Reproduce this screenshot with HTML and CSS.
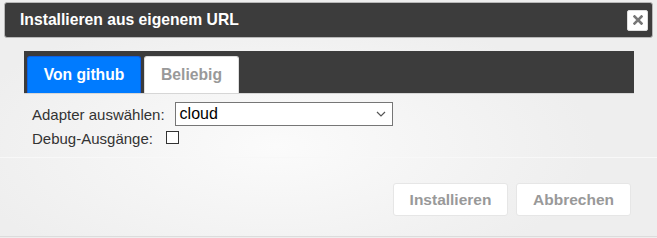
FILE: index.html
```html
<!DOCTYPE html>
<html>
  <head>
    <title>Installieren aus eigenem URL</title>
    <link rel="stylesheet" href="styles.css">
  </head>
  <body>
    <section class="dialog">
      <header class="titlebar">
        <span class="title">Installieren aus eigenem URL</span>
        <button class="close" title="Schließen">
          <svg width="10" height="10" viewBox="0 0 10 10">
            <path d="M1.5 1.5 L8.5 8.5 M8.5 1.5 L1.5 8.5" stroke="#777" stroke-width="2.6" stroke-linecap="square"/>
          </svg>
        </button>
      </header>
      <nav class="tabs">
        <div class="tab active">Von github</div>
        <div class="tab">Beliebig</div>
      </nav>
      <div class="content">
        <div class="row">
          <label for="adapter">Adapter auswählen:</label>
          <div class="select" id="adapter">
            <span>cloud</span>
            <svg width="10" height="6" viewBox="0 0 10 6">
              <path d="M1 1 L5 5 L9 1" fill="none" stroke="#555" stroke-width="1.2"/>
            </svg>
          </div>
        </div>
        <div class="row">
          <label for="debug">Debug-Ausgänge:</label>
          <span class="checkbox" id="debug"></span>
        </div>
      </div>
      <footer class="buttons">
        <button class="btn">Installieren</button>
        <button class="btn">Abbrechen</button>
      </footer>
    </section>
  </body>
</html>
```

FILE: styles.css
```css
  body {
    margin: 0;
    font-family: 'Liberation Sans', Arial, sans-serif;
    background: #eeeeee;
  }

  .dialog {
    height: 237px;
    border-bottom: 1px solid #dcdcdc;
    background: radial-gradient(ellipse 320px 140px at 42% 62%, #fbfbfb, #eeeeee);
    padding-top: 2px;
    box-sizing: border-box;
  }

  .titlebar {
    margin: 0 4px;
    height: 36px;
    box-sizing: border-box;
    border: 1px solid #b8b8b8;
    border-radius: 3px;
    background: #3c3c3c;
    display: flex;
    align-items: center;
    justify-content: space-between;
    padding: 0 4px 0 15px;
  }

  .title {
    color: #fff;
    font-weight: bold;
    font-size: 15.7px;
  }

  .close {
    width: 21px;
    height: 21px;
    padding: 0;
    border: 1px solid #ddd;
    border-radius: 2px;
    background: #fff;
    display: flex;
    align-items: center;
    justify-content: center;
  }

  .tabs {
    margin: 13px 23px 0 24px;
    height: 43px;
    box-sizing: border-box;
    background: #3c3c3c;
    border-bottom: 1px solid #d6d6d6;
    display: flex;
    align-items: flex-end;
    gap: 3px;
    padding-left: 3px;
  }

  .tab {
    width: 95px;
    height: 37px;
    box-sizing: border-box;
    background: #fff;
    border: 1px solid #ddd;
    border-bottom: none;
    border-radius: 3px 3px 0 0;
    color: #999;
    font-weight: bold;
    font-size: 15.7px;
    display: flex;
    align-items: center;
    justify-content: center;
  }

  .tab.active {
    width: 114px;
    background: #007bff;
    border-color: #0d5ee0;
    color: #fff;
  }

  .content {
    padding: 8px 0 0 32px;
    color: #333;
    font-size: 15px;
    height: 55px;
    border-bottom: 1px solid #f8f8f8;
  }

  .row {
    display: flex;
    align-items: center;
    height: 24px;
  }

  .row label {
    margin-right: 10px;
  }

  .select {
    width: 218px;
    height: 24px;
    box-sizing: border-box;
    border: 1px solid #767676;
    background: #fff;
    display: flex;
    align-items: center;
    justify-content: space-between;
    padding: 0 6px 0 4px;
    color: #000;
    font-size: 16px;
  }

  .checkbox {
    width: 13px;
    height: 13px;
    box-sizing: border-box;
    border: 1px solid #333;
    background: #fff;
    margin: 0 0 2px 3px;
  }

  .buttons {
    display: flex;
    justify-content: flex-end;
    gap: 8px;
    padding: 25px 26px 0 0;
  }

  .btn {
    width: 115px;
    height: 33px;
    border: 1px solid #e6e6e6;
    border-radius: 3px;
    background: #fff;
    color: #999;
    font-family: 'Liberation Sans', Arial, sans-serif;
    font-weight: bold;
    font-size: 15.5px;
  }
```
